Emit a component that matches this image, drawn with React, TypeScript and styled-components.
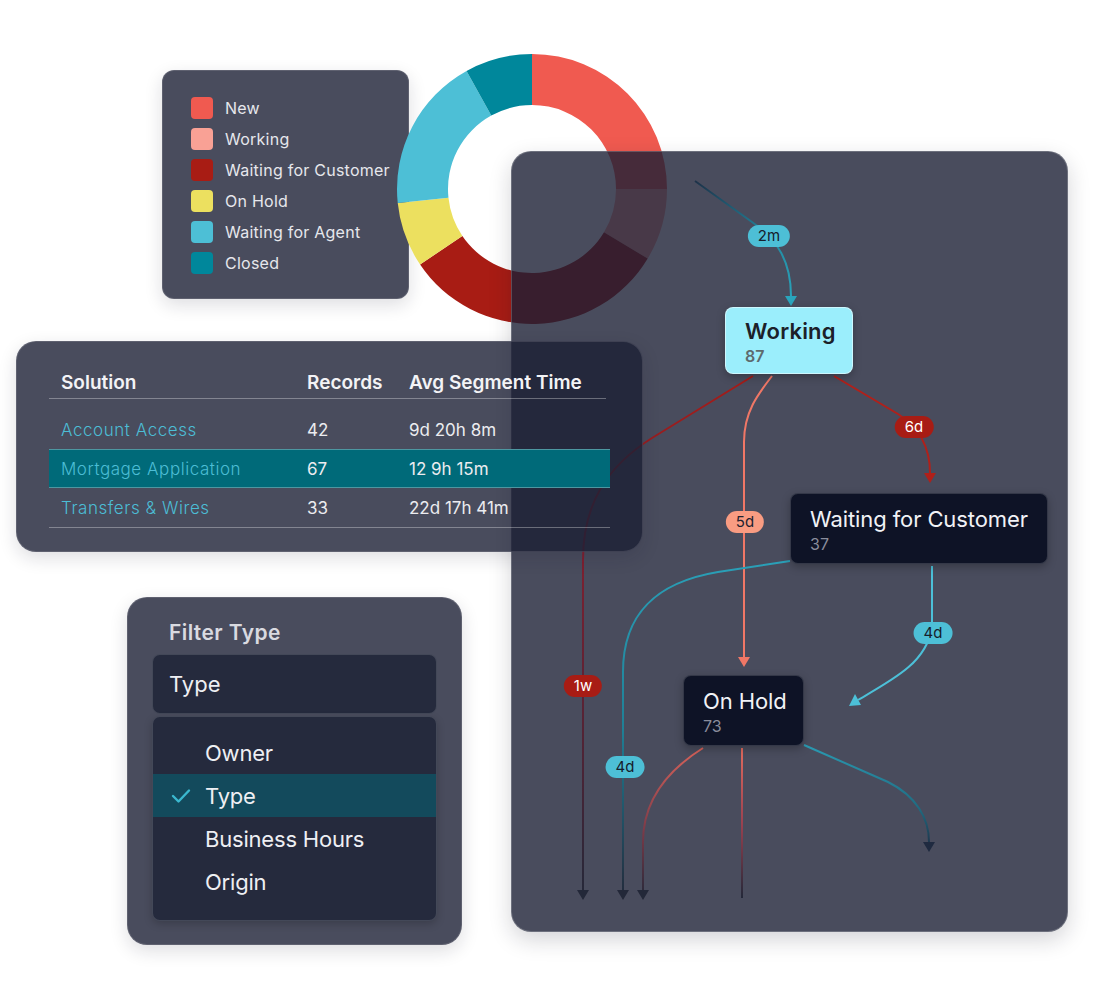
import React from "react";
import styled, { createGlobalStyle } from "styled-components";

const Global = createGlobalStyle`
  html, body { margin: 0; padding: 0; background: #ffffff; }
  body { font-family: "Inter", "Lato", sans-serif; -webkit-font-smoothing: antialiased; }
`;

const FONT = `"Inter", "Lato", sans-serif`;
const PANEL_BG = "rgba(28, 31, 53, 0.8)";
const PANEL_BORDER = "rgba(255, 255, 255, 0.12)";

const Canvas = styled.div`
  position: relative;
  width: 1096px;
  height: 998px;
  overflow: hidden;
  background: #ffffff;
  font-family: ${FONT};
`;

const Window = styled.div<{ $x: number; $y: number; $w: number; $h: number; $z: number; $r?: number }>`
  position: absolute;
  left: ${(p) => p.$x}px;
  top: ${(p) => p.$y}px;
  width: ${(p) => p.$w}px;
  height: ${(p) => p.$h}px;
  z-index: ${(p) => p.$z};
  box-sizing: border-box;
  background: ${PANEL_BG};
  border: 1px solid ${PANEL_BORDER};
  border-radius: ${(p) => p.$r ?? 20}px;
  box-shadow: 0 6px 18px rgba(20, 24, 40, 0.14);
`;

/* ---------- Legend ---------- */
const LegendPanel = styled(Window)`
  display: flex;
  flex-direction: column;
  padding: 21px 0 0 28px;
`;

const LegendRow = styled.div`
  display: flex;
  align-items: center;
  gap: 12px;
  height: 31px;
  color: #e6e7ec;
  font-size: 16px;
  letter-spacing: 0.25px;
`;

const Swatch = styled.span<{ $c: string }>`
  width: 22px;
  height: 22px;
  border-radius: 4px;
  background: ${(p) => p.$c};
  flex: none;
`;

/* ---------- Donut ---------- */
const DonutWrap = styled.div`
  position: absolute;
  left: 396px;
  top: 53px;
  width: 272px;
  height: 272px;
  z-index: 2;
`;

/* ---------- Table ---------- */
const TablePanel = styled(Window)`
  padding: 24px 32px 0 32px;
  display: flex;
  flex-direction: column;
`;

const Grid = styled.div`
  display: grid;
  grid-template-columns: 246px 102px 1fr;
  align-items: center;
`;

const HeadRow = styled(Grid)`
  height: 32px;
  border-bottom: 1px solid rgba(255, 255, 255, 0.32);
  margin-right: 4px;
  color: #f3f3f6;
  font-size: 19px;
  font-weight: 600;
  letter-spacing: 0.3px;
`;

const BodyRows = styled.div`
  margin-top: 11px;
  display: flex;
  flex-direction: column;
  border-bottom: 1px solid rgba(255, 255, 255, 0.32);
`;

const BodyRow = styled(Grid)<{ $on?: boolean }>`
  height: 39px;
  box-sizing: border-box;
  font-size: 17px;
  color: #ececf0;
  background: ${(p) => (p.$on ? "#006a79" : "transparent")};
  border-top: 1px solid ${(p) => (p.$on ? "rgba(255,255,255,0.3)" : "transparent")};
  border-bottom: 1px solid ${(p) => (p.$on ? "rgba(255,255,255,0.3)" : "transparent")};
`;

const Cell = styled.span<{ $link?: boolean }>`
  padding-left: 12px;
  color: ${(p) => (p.$link ? "#4cbdd5" : "inherit")};
  font-weight: ${(p) => (p.$link ? 300 : "inherit")};
  letter-spacing: ${(p) => (p.$link ? "0.55px" : "0")};
  white-space: nowrap;
`;

/* ---------- Filter ---------- */
const FilterPanel = styled(Window)`
  padding: 20px 24px 0 24px;
  display: flex;
  flex-direction: column;
`;

const FilterLabel = styled.div`
  padding-left: 17px;
  height: 30px;
  line-height: 30px;
  font-size: 21px;
  font-weight: 600;
  letter-spacing: 0.4px;
  color: #d9dae0;
  margin-bottom: 6px;
`;

const SelectBox = styled.div`
  height: 60px;
  box-sizing: border-box;
  border-radius: 8px;
  background: #252a3d;
  border: 1px solid rgba(255, 255, 255, 0.14);
  display: flex;
  align-items: center;
  padding-left: 16px;
  font-size: 22px;
  color: #eeeff3;
`;

const Menu = styled.div`
  margin-top: 2px;
  height: 205px;
  box-sizing: border-box;
  border-radius: 8px;
  background: #252a3d;
  border: 1px solid rgba(255, 255, 255, 0.14);
  padding-top: 14px;
  display: flex;
  flex-direction: column;
  box-shadow: 0 3px 8px rgba(0, 0, 0, 0.2);
`;

const MenuItem = styled.div<{ $on?: boolean }>`
  height: 43px;
  display: flex;
  align-items: center;
  padding-left: 17px;
  gap: 14px;
  font-size: 22px;
  letter-spacing: -0.2px;
  color: #eeeff3;
  background: ${(p) => (p.$on ? "#134a5c" : "transparent")};
`;

const CheckSlot = styled.span`
  width: 21px;
  height: 21px;
  display: flex;
  align-items: center;
  justify-content: center;
  flex: none;
`;

/* ---------- Flow ---------- */
const FlowPanel = styled(Window)`
  border: 1px solid rgba(255, 255, 255, 0.2);
  box-shadow: 0 8px 22px rgba(20, 24, 40, 0.18);
`;

const FlowSvg = styled.svg`
  position: absolute;
  left: -1px;
  top: -1px;
  width: 557px;
  height: 781px;
  overflow: visible;
`;

const Node = styled.div<{ $x: number; $y: number; $w: number; $light?: boolean }>`
  position: absolute;
  left: ${(p) => p.$x - 512}px;
  top: ${(p) => p.$y - 152}px;
  width: ${(p) => p.$w}px;
  height: ${(p) => (p.$light ? 67 : 71)}px;
  box-sizing: border-box;
  border-radius: 8px;
  padding: ${(p) => (p.$light ? "8px 0 0 19px" : "10px 0 0 19px")};
  background: ${(p) => (p.$light ? "#9beefc" : "#0e1326")};
  border: 1px solid ${(p) => (p.$light ? "rgba(255,255,255,0.5)" : "rgba(255,255,255,0.16)")};
  box-shadow: 0 3px 8px rgba(0, 0, 0, 0.25);
  display: flex;
  flex-direction: column;
`;

const NodeTitle = styled.div<{ $light?: boolean }>`
  font-size: 22px;
  line-height: 30px;
  font-weight: ${(p) => (p.$light ? 600 : 400)};
  color: ${(p) => (p.$light ? "#1c2029" : "#f1f2f6")};
  letter-spacing: ${(p) => (p.$light ? "0.2px" : "-0.1px")};
  white-space: nowrap;
`;

const NodeCount = styled.div<{ $light?: boolean }>`
  font-size: 16px;
  line-height: 20px;
  font-weight: ${(p) => (p.$light ? 600 : 400)};
  color: ${(p) => (p.$light ? "#5d6a6e" : "#8a8d9c")};
`;

const Pill = styled.div<{ $x: number; $y: number; $bg: string; $fg: string }>`
  position: absolute;
  left: ${(p) => p.$x - 512}px;
  top: ${(p) => p.$y - 152}px;
  transform: translate(-50%, -50%);
  height: 22px;
  padding: 0 10px;
  border-radius: 11px;
  background: ${(p) => p.$bg};
  color: ${(p) => p.$fg};
  font-size: 15px;
  line-height: 22px;
  white-space: nowrap;
`;

/* ---------- Data ---------- */
const legend = [
  { label: "New", color: "#f05a50" },
  { label: "Working", color: "#f9a195" },
  { label: "Waiting for Customer", color: "#a81c14" },
  { label: "On Hold", color: "#ece05f" },
  { label: "Waiting for Agent", color: "#4dbfd6" },
  { label: "Closed", color: "#00879b" },
];

const segments = [
  { from: 0, to: 90, color: "#f05a50" },
  { from: 90, to: 121, color: "#f9a195" },
  { from: 121, to: 236, color: "#a81c14" },
  { from: 236, to: 264, color: "#ece05f" },
  { from: 264, to: 331, color: "#4dbfd6" },
  { from: 331, to: 360, color: "#00879b" },
];

const rows = [
  { name: "Account Access", records: "42", time: "9d 20h 8m" },
  { name: "Mortgage Application", records: "67", time: "12 9h 15m", on: true },
  { name: "Transfers & Wires", records: "33", time: "22d 17h 41m" },
];

const menu = ["Owner", "Type", "Business Hours", "Origin"];

function pt(cx: number, cy: number, r: number, deg: number) {
  const a = ((deg - 90) * Math.PI) / 180;
  return [cx + r * Math.cos(a), cy + r * Math.sin(a)];
}

function arc(cx: number, cy: number, ro: number, ri: number, a0: number, a1: number) {
  const [x0, y0] = pt(cx, cy, ro, a0);
  const [x1, y1] = pt(cx, cy, ro, a1);
  const [x2, y2] = pt(cx, cy, ri, a1);
  const [x3, y3] = pt(cx, cy, ri, a0);
  const large = a1 - a0 > 180 ? 1 : 0;
  return `M${x0},${y0} A${ro},${ro} 0 ${large} 1 ${x1},${y1} L${x2},${y2} A${ri},${ri} 0 ${large} 0 ${x3},${y3} Z`;
}

type Edge = {
  id: string;
  d: string;
  y0: number;
  y1: number;
  stops: [number, string][];
  head?: { x: number; y: number; dir: "down" | "downleft"; color: string };
};

const DARK = "#232839";

const edges: Edge[] = [
  {
    id: "e2m",
    d: "M695,181 L752,222 C778,240 791,262 791,296",
    y0: 181,
    y1: 300,
    stops: [[0, "#1d3148"], [0.45, "#22889f"], [1, "#2aa5bd"]],
    head: { x: 791, y: 306, dir: "down", color: "#2aa5bd" },
  },
  {
    id: "e1w",
    d: "M753,376 L652,438 C606,467 583,505 583,560 L583,890",
    y0: 376,
    y1: 900,
    stops: [[0, "#a41c18"], [0.35, "#7d2030"], [0.75, "#4a2436"], [1, DARK]],
    head: { x: 583, y: 900, dir: "down", color: DARK },
  },
  {
    id: "e5d",
    d: "M772,376 C758,394 744,412 744,442 L744,657",
    y0: 376,
    y1: 667,
    stops: [[0, "#f07766"], [1, "#f07766"]],
    head: { x: 744, y: 667, dir: "down", color: "#f07766" },
  },
  {
    id: "e6d",
    d: "M834,376 L898,414 C920,428 930,448 930,473",
    y0: 376,
    y1: 483,
    stops: [[0, "#b0201a"], [1, "#b0201a"]],
    head: { x: 930, y: 483, dir: "down", color: "#b0201a" },
  },
  {
    id: "eWl",
    d: "M790,561 L718,572 C658,582 623,612 623,672 L623,890",
    y0: 561,
    y1: 900,
    stops: [[0, "#2aa0b8"], [0.5, "#1f7f95"], [1, DARK]],
    head: { x: 623, y: 900, dir: "down", color: DARK },
  },
  {
    id: "eW4",
    d: "M932,566 L932,628 C926,662 896,678 858,700",
    y0: 566,
    y1: 706,
    stops: [[0, "#4cc0d8"], [1, "#4cc0d8"]],
    head: { x: 849, y: 706, dir: "downleft", color: "#4cc0d8" },
  },
  {
    id: "eHl",
    d: "M703,748 C668,770 643,800 643,842 L643,890",
    y0: 748,
    y1: 900,
    stops: [[0, "#d8625a"], [0.55, "#7a3a48"], [1, DARK]],
    head: { x: 643, y: 900, dir: "down", color: DARK },
  },
  {
    id: "eHm",
    d: "M742,748 L742,898",
    y0: 748,
    y1: 898,
    stops: [[0, "#e06a5e"], [0.5, "#9a4250"], [1, DARK]],
  },
  {
    id: "eHr",
    d: "M804,745 L888,782 C916,796 929,818 929,842",
    y0: 745,
    y1: 852,
    stops: [[0, "#2a9ab2"], [0.6, "#1f6a80"], [1, "#1f2a40"]],
    head: { x: 929, y: 852, dir: "down", color: "#1f2a40" },
  },
];

function headPoints(h: NonNullable<Edge["head"]>) {
  if (h.dir === "down") {
    return `${h.x - 6},${h.y - 10} ${h.x + 6},${h.y - 10} ${h.x},${h.y}`;
  }
  return `${h.x},${h.y} ${h.x + 6},${h.y - 12} ${h.x + 12},${h.y - 1}`;
}

const pills = [
  { t: "2m", x: 769, y: 236, bg: "#4dbfd6", fg: "#16202c" },
  { t: "6d", x: 914, y: 427, bg: "#a81c14", fg: "#ffffff" },
  { t: "5d", x: 745, y: 522, bg: "#f99c82", fg: "#1e2230" },
  { t: "4d", x: 933, y: 633, bg: "#4dbfd6", fg: "#16202c" },
  { t: "1w", x: 583, y: 686, bg: "#a81c14", fg: "#ffffff" },
  { t: "4d", x: 625, y: 767, bg: "#4dbfd6", fg: "#16202c" },
];

export default function App() {
  return (
    <Canvas>
      <Global />

      <LegendPanel $x={162} $y={70} $w={247} $h={229} $z={1} $r={12}>
        {legend.map((l) => (
          <LegendRow key={l.label}>
            <Swatch $c={l.color} />
            {l.label}
          </LegendRow>
        ))}
      </LegendPanel>

      <DonutWrap>
        <svg width="272" height="272" viewBox="0 0 272 272">
          {segments.map((s) => (
            <path key={s.from} d={arc(136, 136, 135, 84, s.from, s.to)} fill={s.color} />
          ))}
        </svg>
      </DonutWrap>

      <FlowPanel $x={511} $y={151} $w={557} $h={781} $z={3}>
        <FlowSvg viewBox="511 151 557 781">
          <defs>
            {edges.map((e) => (
              <linearGradient key={e.id} id={e.id} gradientUnits="userSpaceOnUse" x1="0" y1={e.y0} x2="0" y2={e.y1}>
                {e.stops.map(([o, c]) => (
                  <stop key={o} offset={o} stopColor={c} />
                ))}
              </linearGradient>
            ))}
          </defs>
          {edges.map((e) => (
            <g key={e.id}>
              <path d={e.d} fill="none" stroke={`url(#${e.id})`} strokeWidth={2} />
              {e.head && <polygon points={headPoints(e.head)} fill={e.head.color} />}
            </g>
          ))}
        </FlowSvg>

        <Node $x={725} $y={307} $w={128} $light>
          <NodeTitle $light>Working</NodeTitle>
          <NodeCount $light>87</NodeCount>
        </Node>
        <Node $x={790} $y={493} $w={258}>
          <NodeTitle>Waiting for Customer</NodeTitle>
          <NodeCount>37</NodeCount>
        </Node>
        <Node $x={683} $y={675} $w={121}>
          <NodeTitle>On Hold</NodeTitle>
          <NodeCount>73</NodeCount>
        </Node>

        {pills.map((p, i) => (
          <Pill key={i} $x={p.x} $y={p.y} $bg={p.bg} $fg={p.fg}>
            {p.t}
          </Pill>
        ))}
      </FlowPanel>

      <TablePanel $x={16} $y={341} $w={627} $h={211} $z={4}>
        <HeadRow>
          <Cell>Solution</Cell>
          <Cell>Records</Cell>
          <Cell>Avg Segment Time</Cell>
        </HeadRow>
        <BodyRows>
          {rows.map((r) => (
            <BodyRow key={r.name} $on={r.on}>
              <Cell $link>{r.name}</Cell>
              <Cell>{r.records}</Cell>
              <Cell>{r.time}</Cell>
            </BodyRow>
          ))}
        </BodyRows>
      </TablePanel>

      <FilterPanel $x={127} $y={597} $w={335} $h={348} $z={5}>
        <FilterLabel>Filter Type</FilterLabel>
        <SelectBox>Type</SelectBox>
        <Menu>
          {menu.map((m) => (
            <MenuItem key={m} $on={m === "Type"}>
              <CheckSlot>
                {m === "Type" && (
                  <svg width="20" height="16" viewBox="0 0 20 16">
                    <polyline points="2,8 7.5,13.5 18,2.5" fill="none" stroke="#3bb8cf" strokeWidth="2.4" strokeLinecap="round" strokeLinejoin="round" />
                  </svg>
                )}
              </CheckSlot>
              {m}
            </MenuItem>
          ))}
        </Menu>
      </FilterPanel>
    </Canvas>
  );
}
